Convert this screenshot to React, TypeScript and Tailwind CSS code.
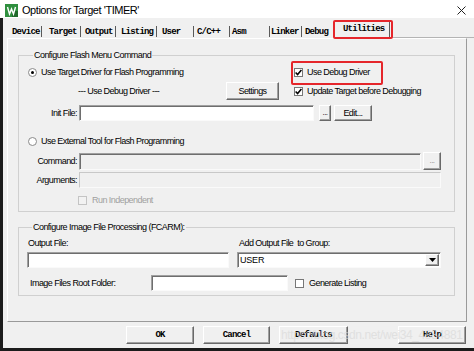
import React from 'react';

const tabFont = "font-['Liberation_Mono',monospace] font-bold text-[9px] tracking-[-0.8px]";

const tabs = [
  { label: 'Device', cls: 'w-[35px] pl-[5px]' },
  { label: 'Target', cls: 'w-[39px] pl-[7px]' },
  { label: 'Output', cls: 'w-[35px] pl-[4px]' },
  { label: 'Listing', cls: 'w-[41px] pl-[5px]' },
  { label: 'User', cls: 'w-[37px] pl-[5px]' },
  { label: 'C/C++', cls: 'w-[36px] pl-[3px]' },
  { label: 'Asm', cls: 'w-[40px] pl-[2px]' },
  { label: 'Linker', cls: 'w-[32px] pl-[1px]' },
  { label: 'Debug', cls: 'w-[32px] pl-[3px] border-r-0' },
];

const Radio = ({ checked }: { checked?: boolean }) => (
  <span className="w-[9px] h-[9px] rounded-full border border-[#8a8a8a] bg-white flex items-center justify-center shrink-0">
    {checked && <span className="w-[3px] h-[3px] rounded-full bg-black" />}
  </span>
);

const Check = ({ checked, disabled }: { checked?: boolean; disabled?: boolean }) => (
  <span
    className={`w-[9px] h-[9px] border flex items-center justify-center shrink-0 ${
      disabled ? 'border-[#c4c4c4] bg-[#f2f2f2]' : 'border-[#777] bg-white'
    }`}
  >
    {checked && (
      <svg width="7" height="7" viewBox="0 0 7 7">
        <path d="M0.6 3.4 L2.6 5.6 L6.4 1" stroke="#000" strokeWidth="1.5" fill="none" />
      </svg>
    )}
  </span>
);

const Btn = ({ className = '', children }: { className?: string; children?: React.ReactNode }) => (
  <div
    className={`flex items-center justify-center bg-[#f0f0f0] border border-t-white border-l-white border-r-[#696969] border-b-[#696969] shadow-[inset_-1px_-1px_0_#a0a0a0] ${className}`}
  >
    {children}
  </div>
);

const Field = ({
  className = '',
  disabled,
  children,
}: {
  className?: string;
  disabled?: boolean;
  children?: React.ReactNode;
}) => (
  <div
    className={`border border-t-[#a0a0a0] border-l-[#a0a0a0] border-r-[#fafafa] border-b-[#fafafa] shadow-[inset_1px_1px_0_#6e6e6e] ${
      disabled ? 'bg-[#f0f0f0]' : 'bg-white'
    } ${className}`}
  >
    {children}
  </div>
);

const TitleBar = () => (
  <div className="h-[18px] bg-white flex items-center pl-[5px] pr-[8px] pt-[2px]">
    <svg width="13" height="13" viewBox="0 0 13 13">
      <rect width="13" height="13" fill="#2f8f3e" />
      <rect x="7" y="7" width="6" height="6" fill="#1f6a2a" />
      <path d="M2.5 3 L4.5 10 L6.5 5 L8.5 10 L10.5 3" stroke="#fff" strokeWidth="1.4" fill="none" />
    </svg>
    <span className="ml-[4px] text-[11px] tracking-[-0.45px] leading-[14px]">Options for Target 'TIMER'</span>
    <svg className="ml-auto" width="9" height="9" viewBox="0 0 9 9">
      <path d="M0.5 0.5 L8.5 8.5 M8.5 0.5 L0.5 8.5" stroke="#222" strokeWidth="1" />
    </svg>
  </div>
);

const TabStrip = () => (
  <div className={`h-[20px] flex items-end ${tabFont}`}>
    {tabs.map((t) => (
      <div key={t.label} className={`h-[11px] mb-[1px] flex items-center border-r border-[#5a5a5a] ${t.cls}`}>
        {t.label}
      </div>
    ))}
    <div className="relative w-[56px] h-[17px] flex items-center pl-[8px] pb-[2px] border-t border-l border-t-white border-l-white border-r border-r-[#5a5a5a]">
      Utilities
      <span className="absolute -left-[2px] -top-[2px] -right-[4px] -bottom-[1px] border-2 border-[#e5262b] rounded-[2px]" />
    </div>
    <div className="flex-1 border-b border-[#b4b4b4]" />
  </div>
);

const FlashGroup = () => (
  <fieldset className="ml-[10px] mt-[10px] w-[437px] border border-[#d0d0d0] pl-[9px] pt-[3px] pb-[5px]">
    <legend className="ml-[5px] px-[1px] leading-[12px]">Configure Flash Menu Command</legend>

    <div className="flex items-center h-[16px]">
      <div className="w-[266px] flex items-center gap-[4px]">
        <Radio checked />
        <span>Use Target Driver for Flash Programming</span>
      </div>
      <div className="relative flex items-center gap-[4px]">
        <Check checked />
        <span>Use Debug Driver</span>
        <span className="absolute -left-[3px] -top-[5px] w-[92px] h-[24px] border-2 border-[#e5262b] rounded-[2px]" />
      </div>
    </div>

    <div className="flex items-center h-[18px] mt-[2px]">
      <span className="w-[50px]" />
      <span className="w-[148px]">--- Use Debug Driver ---</span>
      <Btn className="w-[53px] h-[18px]">Settings</Btn>
      <span className="w-[15px]" />
      <div className="flex items-center gap-[4px]">
        <Check checked />
        <span>Update Target before Debugging</span>
      </div>
    </div>

    <div className="flex items-center h-[16px] mt-[5px]">
      <span className="w-[49px] text-right">Init File:</span>
      <Field className="ml-[2px] w-[235px] h-[16px]" />
      <Btn className="ml-[5px] w-[12px] h-[16px] text-[8px]">...</Btn>
      <Btn className="ml-[3px] w-[38px] h-[16px]">Edit...</Btn>
    </div>

    <div className="flex items-center h-[12px] mt-[14px] gap-[4px]">
      <Radio />
      <span>Use External Tool for Flash Programming</span>
    </div>

    <div className="flex items-center h-[18px] mt-[5px]">
      <span className="w-[49px] text-right">Command:</span>
      <Field disabled className="ml-[2px] w-[342px] h-[17px]" />
      <Btn className="ml-[2px] w-[18px] h-[18px] text-[8px] text-[#888]">...</Btn>
    </div>

    <div className="flex items-center h-[16px] mt-[2px]">
      <span className="w-[49px] text-right">Arguments:</span>
      <Field disabled className="ml-[2px] w-[362px] h-[16px] border-t-[#c8c8c8] border-l-[#c8c8c8] shadow-none" />
    </div>

    <div className="flex items-center h-[12px] mt-[6px] ml-[50px] gap-[5px] text-[#a0a0a0]">
      <Check disabled />
      <span>Run Independent</span>
    </div>
  </fieldset>
);

const ImageGroup = () => (
  <fieldset className="ml-[10px] mt-[9px] w-[437px] border border-[#d0d0d0] pl-[8px] pt-[4px] pb-[4px]">
    <legend className="ml-[5px] px-[1px] leading-[12px]">Configure Image File Processing (FCARM):</legend>

    <div className="flex items-center h-[12px]">
      <span className="ml-[1px] w-[211px]">Output File:</span>
      <span>Add Output File&nbsp; to Group:</span>
    </div>

    <div className="flex items-center h-[16px] mt-[3px]">
      <Field className="w-[202px] h-[16px]" />
      <Field className="ml-[8px] w-[204px] h-[16px] flex items-center pl-[2px] pr-[1px]">
        <span className="tracking-[-0.2px]">USER</span>
        <Btn className="ml-auto w-[14px] h-[12px]">
          <svg width="7" height="4" viewBox="0 0 7 4">
            <path d="M0 0 H7 L3.5 4 Z" fill="#000" />
          </svg>
        </Btn>
      </Field>
    </div>

    <div className="flex items-center h-[16px] mt-[7px]">
      <span className="ml-[3px] w-[121px]">Image Files Root Folder:</span>
      <Field className="w-[137px] h-[16px]" />
      <div className="ml-[7px] flex items-center gap-[5px]">
        <Check />
        <span>Generate Listing</span>
      </div>
    </div>
  </fieldset>
);

const ButtonRow = () => (
  <div className={`relative flex h-[18px] mt-[4px] ${tabFont}`}>
    <Btn className="ml-[119px] w-[68px] h-[18px]">OK</Btn>
    <Btn className="ml-[9px] w-[67px] h-[18px]">Cancel</Btn>
    <Btn className="ml-[9px] w-[69px] h-[18px]">Defaults</Btn>
    <Btn className="ml-[50px] w-[68px] h-[18px]">Help</Btn>
    <span className="absolute left-[274px] top-[2px] font-['Liberation_Sans',sans-serif] font-normal text-[12px] leading-[14px] tracking-[-0.4px] text-[#dadada] opacity-70 pointer-events-none whitespace-nowrap">
      https://blog.csdn.net/wei34_4884881
    </span>
  </div>
);

export default function App() {
  return (
    <div className="w-[474px] h-[351px] bg-[#1c1c1c] overflow-hidden flex flex-col font-['Liberation_Sans',Arial,sans-serif] text-[9px] leading-[12px] tracking-[-0.55px] text-black">
      <TitleBar />
      <div className="ml-[3px] h-[330px] bg-[#f0f0f0] pl-[4px] flex flex-col">
        <TabStrip />
        <div className="w-[460px] h-[284px] border border-t-white border-l-white border-r-[#9a9a9a] border-b-[#9a9a9a] flex flex-col">
          <FlashGroup />
          <ImageGroup />
        </div>
        <ButtonRow />
      </div>
    </div>
  );
}
